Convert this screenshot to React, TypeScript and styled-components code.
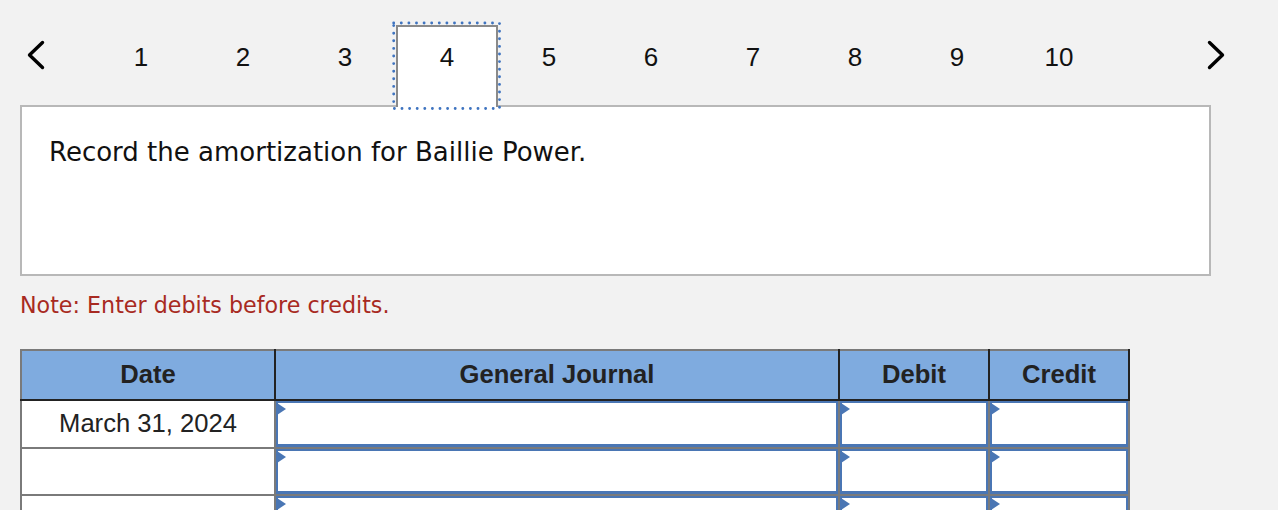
import React from 'react';
import styled, { createGlobalStyle } from 'styled-components';

const colors = {
  page: '#f2f2f2',
  tabBorder: '#8a8a8a',
  focus: '#3f74c0',
  boxBorder: '#b8b8b8',
  note: '#a82a22',
  header: '#7fabdf',
  dark: '#222222',
  grid: '#7a7a7a',
  input: '#4a76b4',
};

const GlobalStyle = createGlobalStyle`
  html, body {
    margin: 0;
    padding: 0;
    background: ${colors.page};
    overflow: hidden;
  }
`;

const Page = styled.div`
  padding: 25px 0 0 20px;
  width: 1258px;
  box-sizing: border-box;
`;

const Nav = styled.nav`
  display: flex;
  align-items: flex-start;
  height: 82px;
  margin-bottom: -2px;
  font-family: 'Liberation Sans', Arial, sans-serif;
`;

const Arrow = styled.button<{ $gap: number }>`
  border: 0;
  background: none;
  padding: 0;
  margin: 15px 0 0 ${(p) => p.$gap}px;
  width: 18px;
  height: 30px;
  display: flex;
  cursor: pointer;
`;

const PrevSlot = styled.div`
  width: 70px;
  display: flex;
`;

const Tab = styled.div<{ $active?: boolean }>`
  position: relative;
  z-index: 1;
  width: 102px;
  height: 82px;
  box-sizing: border-box;
  padding-top: 15px;
  text-align: center;
  font-size: 26px;
  line-height: 30px;
  color: #111;
  border: 2px solid ${(p) => (p.$active ? colors.tabBorder : 'transparent')};
  border-bottom: 0;
  background: ${(p) => (p.$active ? '#fff' : 'transparent')};
`;

// dotted focus ring drawn over the active tab
const FocusRing = styled.svg`
  position: absolute;
  left: -8px;
  top: -8px;
  width: 110px;
  height: 92px;
  overflow: visible;
  pointer-events: none;
`;

const QuestionBox = styled.section`
  width: 1191px;
  height: 171px;
  box-sizing: border-box;
  background: #fff;
  border: 2px solid ${colors.boxBorder};
  padding: 30px 0 0 27px;
  font-family: 'DejaVu Sans', Verdana, sans-serif;
  font-size: 26px;
  line-height: 1.2;
  color: #111;
`;

const Note = styled.p`
  margin: 16px 0 30px;
  font-family: 'DejaVu Sans', Verdana, sans-serif;
  font-size: 22.2px;
  line-height: 1.2;
  color: ${colors.note};
`;

const Journal = styled.table`
  border-collapse: collapse;
  table-layout: fixed;
  width: 1108px;
  font-family: 'Liberation Sans', Arial, sans-serif;
  font-size: 25.6px;
  color: ${colors.dark};
  border: 2px solid ${colors.grid};
`;

const HeadCell = styled.th`
  height: 48px;
  padding: 0;
  background: ${colors.header};
  font-weight: bold;
  text-align: center;
  vertical-align: middle;
  border: 2px solid ${colors.dark};
  border-top-color: ${colors.grid};
  &:first-child {
    border-left-color: ${colors.grid};
  }
`;

const DateCell = styled.td`
  padding: 0;
  text-align: center;
  vertical-align: middle;
  background: #fff;
  border: 2px solid ${colors.grid};
`;

const EntryCell = styled.td`
  padding: 0;
  border: 2px solid ${colors.grid};
  vertical-align: top;
`;

const EntryBox = styled.div<{ $tall?: boolean }>`
  position: relative;
  height: ${(p) => (p.$tall ? 46 : 45)}px;
  box-sizing: border-box;
  background: #fff;
  border: 2px solid ${colors.input};
  border-bottom-width: 3px;
`;

const Marker = styled.span`
  position: absolute;
  top: 0;
  left: -1px;
  width: 0;
  height: 0;
  border-left: 9px solid ${colors.input};
  border-top: 6px solid transparent;
  border-bottom: 6px solid transparent;
`;

const Chevron: React.FC<{ dir: 'left' | 'right' }> = ({ dir }) => (
  <svg width="18" height="30" viewBox="0 0 18 30">
    <polyline
      points={dir === 'left' ? '15.5,2.5 2.5,15 15.5,27.5' : '2.5,2.5 15.5,15 2.5,27.5'}
      fill="none"
      stroke="#000"
      strokeWidth="3.4"
      strokeLinecap="round"
      strokeLinejoin="round"
    />
  </svg>
);

const Entry: React.FC<{ tall?: boolean }> = ({ tall }) => (
  <EntryCell>
    <EntryBox $tall={tall}>
      <Marker />
    </EntryBox>
  </EntryCell>
);

const rows = ['March 31, 2024', '', ''];

export default function App() {
  return (
    <>
      <GlobalStyle />
      <Page>
        <Nav>
          <PrevSlot>
            <Arrow $gap={7} aria-label="Previous">
              <Chevron dir="left" />
            </Arrow>
          </PrevSlot>
          {Array.from({ length: 10 }, (_, i) => (
            <Tab key={i} $active={i === 3}>
              {i + 1}
              {i === 3 && (
                <FocusRing viewBox="0 0 110 92">
                  <rect
                    x="3.7"
                    y="4"
                    width="105.8"
                    height="85.5"
                    fill="none"
                    stroke={colors.focus}
                    strokeWidth="2.9"
                    strokeLinecap="round"
                    strokeDasharray="0 7.6"
                  />
                </FocusRing>
              )}
            </Tab>
          ))}
          <Arrow $gap={97} aria-label="Next">
            <Chevron dir="right" />
          </Arrow>
        </Nav>
        <QuestionBox>Record the amortization for Baillie Power.</QuestionBox>
        <Note>Note: Enter debits before credits.</Note>
        <Journal>
          <colgroup>
            <col style={{ width: 254 }} />
            <col style={{ width: 564 }} />
            <col style={{ width: 150 }} />
            <col style={{ width: 140 }} />
          </colgroup>
          <thead>
            <tr>
              <HeadCell>Date</HeadCell>
              <HeadCell>General Journal</HeadCell>
              <HeadCell>Debit</HeadCell>
              <HeadCell>Credit</HeadCell>
            </tr>
          </thead>
          <tbody>
            {rows.map((date, i) => (
              <tr key={i}>
                <DateCell>{date}</DateCell>
                <Entry tall={i === 0} />
                <Entry tall={i === 0} />
                <Entry tall={i === 0} />
              </tr>
            ))}
          </tbody>
        </Journal>
      </Page>
    </>
  );
}
